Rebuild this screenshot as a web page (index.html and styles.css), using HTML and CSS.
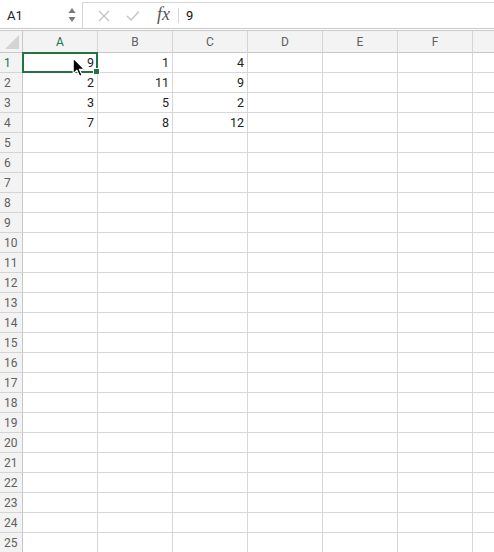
FILE: index.html
```html
<!DOCTYPE html>
<html>
<head>
<meta charset="utf-8">
<link rel="stylesheet" href="styles.css">
</head>
<body>
<div class="app">
  <div class="formula-bar">
    <div class="name-box">
      <span class="name-text">A1</span>
      <svg class="spinner" width="8" height="16" viewBox="0 0 8 16">
        <path d="M4 1 L7.5 6 L0.5 6 Z" fill="#7a7a7a"/>
        <path d="M4 15 L7.5 10 L0.5 10 Z" fill="#7a7a7a"/>
      </svg>
    </div>
    <div class="formula-area">
      <svg class="icon icon-x" width="12" height="12" viewBox="0 0 12 12">
        <path d="M1 1 L11 11 M11 1 L1 11" stroke="#c4c4c4" stroke-width="1.4" fill="none"/>
      </svg>
      <svg class="icon icon-check" width="14" height="12" viewBox="0 0 14 12">
        <path d="M1 6 L5 10 L13 1.5" stroke="#c4c4c4" stroke-width="1.4" fill="none"/>
      </svg>
      <span class="fx">fx</span>
      <span class="fsep"></span>
      <span class="formula-value">9</span>
    </div>
  </div>
  <div class="sheet">
    <div class="grid" id="grid"></div>
    <div class="selection"><span class="handle"></span></div>
    <svg class="cursor" width="14" height="21" viewBox="0 0 12 18">
      <path d="M1 1 L1 14.5 L4.2 11.3 L6.6 16.6 L8.6 15.7 L6.3 10.5 L10.6 10.5 Z" fill="#000" stroke="#fff" stroke-width="1" stroke-linejoin="round"/>
    </svg>
  </div>
</div>
<script>
(function(){
  var cols = ['A','B','C','D','E','F',''];
  var data = {1:[9,1,4],2:[2,11,9],3:[3,5,2],4:[7,8,12]};
  var g = document.getElementById('grid');
  var h = '<div class="corner"><span class="tri"></span></div>';
  cols.forEach(function(c,i){
    h += '<div class="colhead' + (i===0?' active':'') + '">' + c + '</div>';
  });
  for (var r=1; r<=25; r++){
    h += '<div class="rowhead' + (r===1?' active':'') + '">' + r + '</div>';
    for (var c=0; c<7; c++){
      var v = (data[r] && data[r][c] !== undefined) ? data[r][c] : '';
      h += '<div class="cell">' + v + '</div>';
    }
  }
  g.innerHTML = h;
})();
</script>
</body>
</html>
```

FILE: styles.css
```css
html, body {
  margin: 0;
  padding: 0;
  background: #ffffff;
}
.app {
  width: 494px;
  height: 552px;
  overflow: hidden;
  font-family: Roboto, "Noto Sans", "Liberation Sans", sans-serif;
  color: #222;
}
.formula-bar {
  height: 28px;
  display: flex;
  border-bottom: 1px solid #c9c9c9;
  background: #fff;
}
.name-box {
  width: 82px;
  display: flex;
  align-items: center;
  justify-content: space-between;
  padding: 0 6px 0 7px;
  box-sizing: border-box;
  padding-top: 2px;
}
.name-text {
  font-size: 13px;
  color: #222;
}
.spinner {
  display: block;
}
.formula-area {
  flex: 1;
  margin-top: 2px;
  border-top: 1px solid #d6d6d6;
  border-left: 1px solid #d6d6d6;
  display: flex;
  align-items: center;
  padding-left: 14px;
}
.icon {
  display: block;
}
.icon-x {
  margin-right: 16px;
  margin-left: 1px;
}
.icon-check {
  margin-right: 17px;
}
.fx {
  font-family: "Liberation Serif", "DejaVu Serif", serif;
  font-style: italic;
  font-size: 18px;
  color: #555;
  margin-top: -3px;
}
.fsep {
  width: 1px;
  height: 15px;
  background: #d6d6d6;
  margin: 0 7px 0 8px;
}
.formula-value {
  font-size: 13px;
  color: #111;
}
.sheet {
  position: relative;
  margin-top: 1px;
  border-top: 1px solid #c9c9c9;
}
.grid {
  display: grid;
  grid-template-columns: 23px repeat(7, 75px);
  grid-template-rows: 22px;
  grid-auto-rows: 20px;
}
.corner, .colhead {
  height: 22px;
  box-sizing: border-box;
  background: #f3f3f3;
  border-right: 1px solid #d4d4d4;
  border-bottom: 1px solid #c8c8c8;
}
.corner {
  position: relative;
  border-right-color: #c8c8c8;
}
.tri {
  position: absolute;
  right: 3px;
  bottom: 3px;
  width: 0;
  height: 0;
  border-left: 14px solid transparent;
  border-bottom: 14px solid #d4d4d4;
}
.colhead {
  display: flex;
  align-items: center;
  justify-content: center;
  font-size: 12px;
  color: #606060;
}
.colhead.active {
  color: #217346;
}
.rowhead {
  box-sizing: border-box;
  background: #f3f3f3;
  border-right: 1px solid #c8c8c8;
  border-bottom: 1px solid #d4d4d4;
  font-size: 12px;
  color: #606060;
  display: flex;
  align-items: center;
  padding-left: 4px;
}
.rowhead.active {
  color: #217346;
}
.cell {
  box-sizing: border-box;
  border-right: 1px solid #d6d6d6;
  border-bottom: 1px solid #d6d6d6;
  font-size: 12.5px;
  color: #222;
  display: flex;
  align-items: center;
  justify-content: flex-end;
  padding-right: 3px;
}
.selection {
  position: absolute;
  left: 22px;
  top: 21px;
  width: 76px;
  height: 21px;
  box-sizing: border-box;
  border: 2px solid #217346;
  pointer-events: none;
}
.handle {
  position: absolute;
  right: -4px;
  bottom: -4px;
  width: 5px;
  height: 5px;
  background: #217346;
  border: 1px solid #fff;
}
.cursor {
  position: absolute;
  left: 72px;
  top: 26px;
}
```
